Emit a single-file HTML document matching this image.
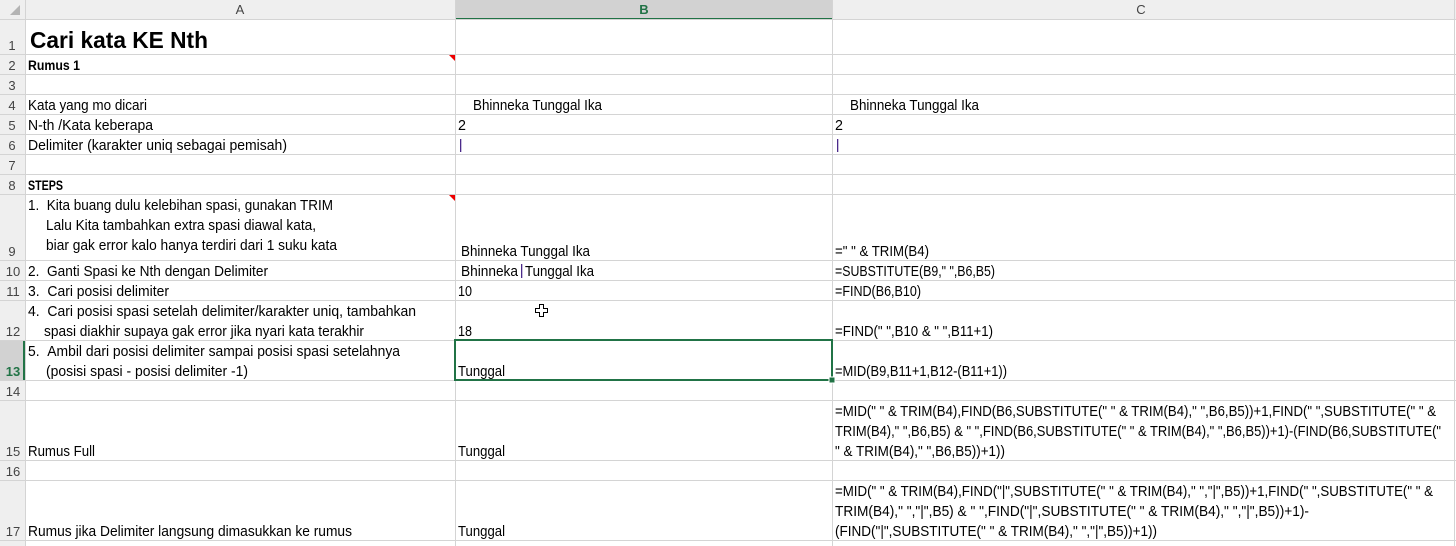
<!DOCTYPE html>
<html><head><meta charset="utf-8"><style>
html,body{margin:0;padding:0;background:#fff;width:1456px;height:546px;overflow:hidden}
svg{display:block}
text{font-family:"Liberation Sans",sans-serif;font-size:14.3px;fill:#000;white-space:pre}
.h{fill:#444;font-size:13px}
.b{font-weight:bold}
</style></head><body>
<svg width="1456" height="546" viewBox="0 0 1456 546" xmlns="http://www.w3.org/2000/svg" xml:space="preserve">
<rect x="0" y="0" width="1456" height="20" fill="#efefef"/>
<rect x="0" y="0" width="25" height="546" fill="#efefef"/>
<rect x="455" y="0" width="377" height="20" fill="#d2d2d2"/>
<rect x="455" y="18" width="377" height="2" fill="#217346"/>
<rect x="0" y="340" width="25" height="40" fill="#d2d2d2"/>
<rect x="23" y="340" width="2" height="40" fill="#217346"/>
<polygon points="20,5 20,15 10,15" fill="#b4b4b4"/>
<g stroke="#d4d4d4" stroke-width="1">
<line x1="0" y1="19.5" x2="1456" y2="19.5"/>
<line x1="25.5" y1="0" x2="25.5" y2="546"/>
<line x1="455.5" y1="0" x2="455.5" y2="546"/>
<line x1="832.5" y1="0" x2="832.5" y2="546"/>
<line x1="1454.5" y1="0" x2="1454.5" y2="546"/>
<line x1="0" y1="54.5" x2="1456" y2="54.5"/>
<line x1="0" y1="74.5" x2="1456" y2="74.5"/>
<line x1="0" y1="94.5" x2="1456" y2="94.5"/>
<line x1="0" y1="114.5" x2="1456" y2="114.5"/>
<line x1="0" y1="134.5" x2="1456" y2="134.5"/>
<line x1="0" y1="154.5" x2="1456" y2="154.5"/>
<line x1="0" y1="174.5" x2="1456" y2="174.5"/>
<line x1="0" y1="194.5" x2="1456" y2="194.5"/>
<line x1="0" y1="260.5" x2="1456" y2="260.5"/>
<line x1="0" y1="280.5" x2="1456" y2="280.5"/>
<line x1="0" y1="300.5" x2="1456" y2="300.5"/>
<line x1="0" y1="340.5" x2="1456" y2="340.5"/>
<line x1="0" y1="380.5" x2="1456" y2="380.5"/>
<line x1="0" y1="400.5" x2="1456" y2="400.5"/>
<line x1="0" y1="460.5" x2="1456" y2="460.5"/>
<line x1="0" y1="480.5" x2="1456" y2="480.5"/>
<line x1="0" y1="540.5" x2="1456" y2="540.5"/>
</g>
<text class="h" x="240" y="14" text-anchor="middle">A</text>
<text class="h b" x="644" y="14" text-anchor="middle" style="fill:#217346">B</text>
<text class="h" x="1141" y="14" text-anchor="middle">C</text>
<text class="h" x="12" y="50" text-anchor="middle">1</text>
<text class="h" x="12" y="70" text-anchor="middle">2</text>
<text class="h" x="12" y="90" text-anchor="middle">3</text>
<text class="h" x="12" y="110" text-anchor="middle">4</text>
<text class="h" x="12" y="130" text-anchor="middle">5</text>
<text class="h" x="12" y="150" text-anchor="middle">6</text>
<text class="h" x="12" y="170" text-anchor="middle">7</text>
<text class="h" x="12" y="190" text-anchor="middle">8</text>
<text class="h" x="12" y="256" text-anchor="middle">9</text>
<text class="h" x="13" y="276" text-anchor="middle">10</text>
<text class="h" x="13" y="296" text-anchor="middle">11</text>
<text class="h" x="13" y="336" text-anchor="middle">12</text>
<text class="h b" x="13" y="376" text-anchor="middle" style="fill:#217346">13</text>
<text class="h" x="13" y="396" text-anchor="middle">14</text>
<text class="h" x="13" y="456" text-anchor="middle">15</text>
<text class="h" x="13" y="476" text-anchor="middle">16</text>
<text class="h" x="13" y="536" text-anchor="middle">17</text>
<polygon points="449,55 455,55 455,61" fill="#e00"/>
<polygon points="449,195 455,195 455,201" fill="#e00"/>
<text class="b" x="30" y="48" style="font-size:23px" textLength="178" lengthAdjust="spacingAndGlyphs">Cari kata KE Nth</text>
<text class="b" x="28" y="70" style="font-size:13.5px" textLength="52" lengthAdjust="spacingAndGlyphs">Rumus 1</text>
<text x="28" y="110" textLength="119" lengthAdjust="spacingAndGlyphs">Kata yang mo dicari</text>
<text x="28" y="130" textLength="125" lengthAdjust="spacingAndGlyphs">N-th /Kata keberapa</text>
<text x="28" y="150" textLength="259" lengthAdjust="spacingAndGlyphs">Delimiter (karakter uniq sebagai pemisah)</text>
<text class="b" x="28" y="190" style="font-size:13.5px" textLength="35" lengthAdjust="spacingAndGlyphs">STEPS</text>
<text x="28" y="210" textLength="305" lengthAdjust="spacingAndGlyphs">1.&#160;&#160;Kita buang dulu kelebihan spasi, gunakan TRIM</text>
<text x="46" y="230" textLength="270" lengthAdjust="spacingAndGlyphs">Lalu Kita tambahkan extra spasi diawal kata,</text>
<text x="46" y="250" textLength="291" lengthAdjust="spacingAndGlyphs">biar gak error kalo hanya terdiri dari 1 suku kata</text>
<text x="28" y="276" textLength="240" lengthAdjust="spacingAndGlyphs">2.&#160;&#160;Ganti Spasi ke Nth dengan Delimiter</text>
<text x="28" y="296" textLength="141" lengthAdjust="spacingAndGlyphs">3.&#160;&#160;Cari posisi delimiter</text>
<text x="28" y="316" textLength="388" lengthAdjust="spacingAndGlyphs">4.&#160;&#160;Cari posisi spasi setelah delimiter/karakter uniq, tambahkan</text>
<text x="44" y="336" textLength="320" lengthAdjust="spacingAndGlyphs">spasi diakhir supaya gak error jika nyari kata terakhir</text>
<text x="28" y="356" textLength="372" lengthAdjust="spacingAndGlyphs">5.&#160;&#160;Ambil dari posisi delimiter sampai posisi spasi setelahnya</text>
<text x="46" y="376" textLength="202" lengthAdjust="spacingAndGlyphs">(posisi spasi - posisi delimiter -1)</text>
<text x="28" y="456" textLength="67" lengthAdjust="spacingAndGlyphs">Rumus Full</text>
<text x="28" y="536" textLength="324" lengthAdjust="spacingAndGlyphs">Rumus jika Delimiter langsung dimasukkan ke rumus</text>
<text x="473" y="110" textLength="129" lengthAdjust="spacingAndGlyphs">Bhinneka Tunggal Ika</text>
<text x="458" y="130">2</text>
<rect x="460" y="139" width="1.3" height="13" fill="#4b2a8a"/>
<text x="461" y="256" textLength="129" lengthAdjust="spacingAndGlyphs">Bhinneka Tunggal Ika</text>
<text x="461" y="276" textLength="57" lengthAdjust="spacingAndGlyphs">Bhinneka</text>
<rect x="521" y="264" width="1.3" height="14" fill="#4b2a8a"/>
<text x="525" y="276" textLength="69" lengthAdjust="spacingAndGlyphs">Tunggal Ika</text>
<text x="458" y="296" textLength="14" lengthAdjust="spacingAndGlyphs">10</text>
<text x="458" y="336" textLength="14" lengthAdjust="spacingAndGlyphs">18</text>
<text x="458" y="376" textLength="47" lengthAdjust="spacingAndGlyphs">Tunggal</text>
<text x="458" y="456" textLength="47" lengthAdjust="spacingAndGlyphs">Tunggal</text>
<text x="458" y="536" textLength="47" lengthAdjust="spacingAndGlyphs">Tunggal</text>
<text x="850" y="110" textLength="129" lengthAdjust="spacingAndGlyphs">Bhinneka Tunggal Ika</text>
<text x="835" y="130">2</text>
<rect x="837" y="139" width="1.3" height="13" fill="#4b2a8a"/>
<text x="835" y="256" textLength="94" lengthAdjust="spacingAndGlyphs">=" " &amp; TRIM(B4)</text>
<text x="835" y="276" textLength="160" lengthAdjust="spacingAndGlyphs">=SUBSTITUTE(B9," ",B6,B5)</text>
<text x="835" y="296" textLength="86" lengthAdjust="spacingAndGlyphs">=FIND(B6,B10)</text>
<text x="835" y="336" textLength="158" lengthAdjust="spacingAndGlyphs">=FIND(" ",B10 &amp; " ",B11+1)</text>
<text x="835" y="376" textLength="172" lengthAdjust="spacingAndGlyphs">=MID(B9,B11+1,B12-(B11+1))</text>
<text x="835" y="416" textLength="601" lengthAdjust="spacingAndGlyphs">=MID(" " &amp; TRIM(B4),FIND(B6,SUBSTITUTE(" " &amp; TRIM(B4)," ",B6,B5))+1,FIND(" ",SUBSTITUTE(" " &amp;</text>
<text x="835" y="436" textLength="606" lengthAdjust="spacingAndGlyphs">TRIM(B4)," ",B6,B5) &amp; " ",FIND(B6,SUBSTITUTE(" " &amp; TRIM(B4)," ",B6,B5))+1)-(FIND(B6,SUBSTITUTE("</text>
<text x="835" y="456" textLength="170" lengthAdjust="spacingAndGlyphs">" &amp; TRIM(B4)," ",B6,B5))+1))</text>
<text x="835" y="496" textLength="598" lengthAdjust="spacingAndGlyphs">=MID(" " &amp; TRIM(B4),FIND("|",SUBSTITUTE(" " &amp; TRIM(B4)," ","|",B5))+1,FIND(" ",SUBSTITUTE(" " &amp;</text>
<text x="835" y="516" textLength="474" lengthAdjust="spacingAndGlyphs">TRIM(B4)," ","|",B5) &amp; " ",FIND("|",SUBSTITUTE(" " &amp; TRIM(B4)," ","|",B5))+1)-</text>
<text x="835" y="536" textLength="322" lengthAdjust="spacingAndGlyphs">(FIND("|",SUBSTITUTE(" " &amp; TRIM(B4)," ","|",B5))+1))</text>
<rect x="455" y="340" width="377" height="40" fill="none" stroke="#217346" stroke-width="2"/>
<rect x="829" y="377" width="6" height="6" fill="#217346" stroke="#fff" stroke-width="1"/>
<path d="M539.5,304.5h4v4h4v4h-4v4h-4v-4h-4v-4h4z" fill="#fff" stroke="#000" stroke-width="1"/>
</svg>
</body></html>
